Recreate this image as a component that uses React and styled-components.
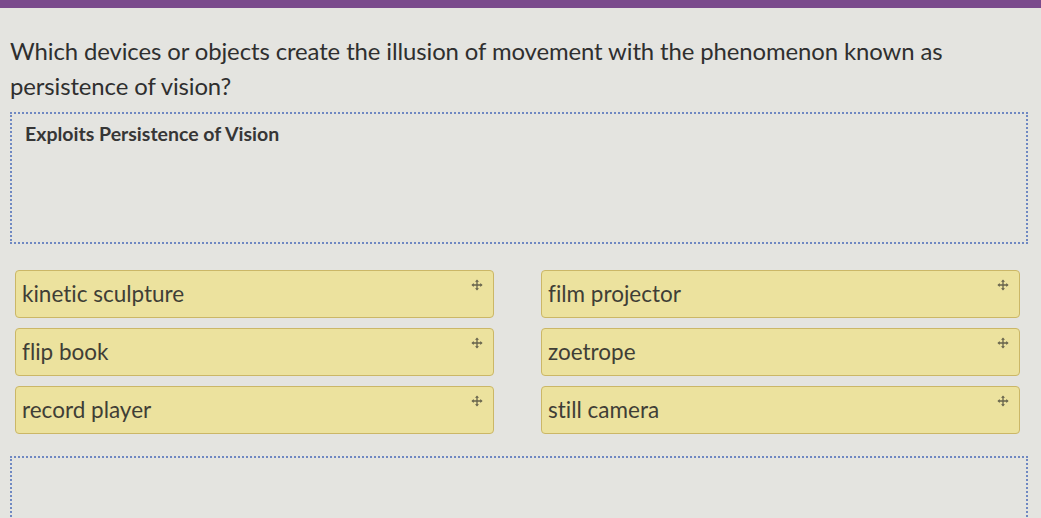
import styled, { createGlobalStyle } from 'styled-components';

const GlobalStyle = createGlobalStyle`
  html, body {
    margin: 0;
    padding: 0;
    background: #e4e4e0;
    font-family: Lato, 'Open Sans', sans-serif;
    font-variant-ligatures: none;
    color: #343434;
  }
`;

const Page = styled.div`
  width: 1041px;
  height: 518px;
  overflow: hidden;
  background: #e4e4e0;
`;

const TopBar = styled.div`
  height: 8px;
  background: #7a4a8c;
`;

const Content = styled.div`
  padding: 0 13px 0 10px;
`;

const Question = styled.h1`
  margin: 25px 0 9px;
  font-size: 23.9px;
  line-height: 35px;
  font-weight: 400;
  color: #2f2f2f;
  letter-spacing: -0.1px;
`;

const DropZone = styled.div`
  border: 2px dotted #6f88c2;
  height: ${p => p.height}px;
  padding: 7px 13px;
  box-sizing: border-box;
`;

const ZoneTitle = styled.div`
  font-size: 19.5px;
  font-weight: 700;
  color: #363636;
  line-height: 26px;
`;

const Choices = styled.div`
  display: grid;
  grid-template-columns: 1fr 1fr;
  column-gap: 47px;
  row-gap: 10px;
  margin: 26px 8px 22px 5px;
`;

const Card = styled.div`
  position: relative;
  height: 48px;
  box-sizing: border-box;
  display: flex;
  align-items: center;
  padding: 0 30px 2px 6px;
  background: #ece29e;
  border: 1px solid #cbb767;
  border-radius: 4px;
  font-size: 22.5px;
  color: #3f3e36;
`;

const Handle = styled.svg`
  position: absolute;
  top: 8px;
  right: 10px;
  width: 12px;
  height: 12px;
`;

const MoveIcon = () => (
  <Handle viewBox="0 0 12 12">
    <path d="M6 2v8M2 6h8" stroke="#66634c" strokeWidth="1.3" />
    <path d="M6 0.4 8 2.7H4zM6 11.6 8 9.3H4zM0.4 6 2.7 4v4zM11.6 6 9.3 4v4z" fill="#66634c" />
  </Handle>
);

const items = [
  'kinetic sculpture',
  'film projector',
  'flip book',
  'zoetrope',
  'record player',
  'still camera',
];

export default function App() {
  return (
    <Page>
      <GlobalStyle />
      <TopBar />
      <Content>
        <Question>
          Which devices or objects create the illusion of movement with the phenomenon known as persistence of vision?
        </Question>
        <DropZone height={132}>
          <ZoneTitle>Exploits Persistence of Vision</ZoneTitle>
        </DropZone>
        <Choices>
          {items.map(item => (
            <Card key={item}>
              {item}
              <MoveIcon />
            </Card>
          ))}
        </Choices>
        <DropZone height={100} />
      </Content>
    </Page>
  );
}
